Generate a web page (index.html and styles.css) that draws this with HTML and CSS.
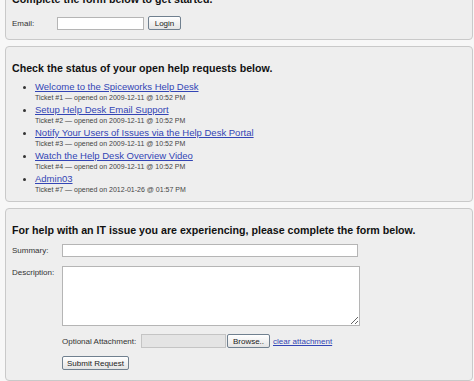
FILE: index.html
```html
<!DOCTYPE html>
<html lang="en">
<head>
  <meta charset="UTF-8">
  <title>Help Desk Portal</title>
  <link rel="stylesheet" href="styles.css">
</head>
<body>

<div class="box box-login">
  <h2>Complete the form below to get started.</h2>
  <div class="login-row">
    <label class="label">Email:</label>
    <input type="text" class="email-input">
    <button class="btn">Login</button>
  </div>
</div>

<div class="box box-tickets">
  <h2>Check the status of your open help requests below.</h2>
  <ul class="tickets">
    <li>
      <a href="#">Welcome to the Spiceworks Help Desk</a>
      <div class="meta">Ticket #1 — opened on 2009-12-11 @ 10:52 PM</div>
    </li>
    <li>
      <a href="#">Setup Help Desk Email Support</a>
      <div class="meta">Ticket #2 — opened on 2009-12-11 @ 10:52 PM</div>
    </li>
    <li>
      <a href="#">Notify Your Users of Issues via the Help Desk Portal</a>
      <div class="meta">Ticket #3 — opened on 2009-12-11 @ 10:52 PM</div>
    </li>
    <li>
      <a href="#">Watch the Help Desk Overview Video</a>
      <div class="meta">Ticket #4 — opened on 2009-12-11 @ 10:52 PM</div>
    </li>
    <li>
      <a href="#">Admin03</a>
      <div class="meta">Ticket #7 — opened on 2012-01-26 @ 01:57 PM</div>
    </li>
  </ul>
</div>

<div class="box box-request">
  <h2>For help with an IT issue you are experiencing, please complete the form below.</h2>
  <div class="field">
    <label class="label">Summary:</label>
    <input type="text" class="summary-input">
  </div>
  <div class="field field-desc">
    <label class="label">Description:</label>
    <textarea class="desc-input"></textarea>
  </div>
  <div class="attach-row">
    <span class="label">Optional Attachment:</span>
    <span class="file-box"></span>
    <button class="btn btn-browse">Browse..</button>
    <a href="#" class="clear-link">clear attachment</a>
  </div>
  <div class="submit-row">
    <button class="btn">Submit Request</button>
  </div>
</div>

</body>
</html>
```

FILE: styles.css
```css
body {
  margin: 0;
  background-color: #f7f7f7;
  font-family: "Liberation Sans", Arial, sans-serif;
  color: #222;
}
.box {
  margin: 0 1px 6px 5px;
  border: 1px solid #c9c9c9;
  border-radius: 4px;
  background-color: #eeeeee;
  padding: 0 6px;
}
.box h2 {
  font-size: 10.65px;
  font-weight: bold;
  color: #111;
  margin: 0;
  line-height: 15px;
  white-space: nowrap;
}
.box-login {
  margin-top: -14px;
  padding-bottom: 9px;
}
.box-login h2 {
  padding-top: 5px;
}
.label {
  font-size: 8px;
  color: #333;
}
.login-row {
  display: flex;
  align-items: center;
  margin-top: 9px;
}
.login-row .label {
  width: 45px;
}
.email-input {
  width: 85px;
  height: 11px;
  padding: 0;
  border: 1px solid #b5b5b5;
  background: #fff;
}
.btn {
  font-family: "Liberation Sans", Arial, sans-serif;
  font-size: 8px;
  color: #222;
  height: 14px;
  padding: 0 5px;
  border: 1px solid #70808f;
  border-radius: 2px;
  background: linear-gradient(#ffffff, #e4e4e4);
}
.login-row .btn {
  margin-left: 4px;
  width: 33px;
}
.box-tickets {
  padding-bottom: 5px;
}
.box-tickets h2 {
  padding-top: 14px;
}
.tickets {
  margin: 5px 0 0;
  padding-left: 23px;
  font-size: 9.5px;
}
.tickets li {
  margin-bottom: 1px;
}
.tickets li::marker {
  color: #333;
  font-size: 9px;
}
.tickets a {
  color: #3345b5;
  line-height: 12px;
}
.meta {
  font-size: 7px;
  color: #444;
  line-height: 10px;
}
.box-request {
  padding-bottom: 10px;
}
.box-request h2 {
  padding-top: 14px;
}
.field {
  display: flex;
  align-items: flex-start;
  margin-top: 6px;
}
.field-desc {
  margin-top: 9px;
}
.field .label {
  width: 50px;
  line-height: 13px;
}
.summary-input {
  width: 294px;
  height: 11px;
  padding: 0;
  border: 1px solid #b5b5b5;
  background: #fff;
}
.desc-input {
  display: block;
  width: 296px;
  height: 58px;
  padding: 0;
  margin: 0;
  border: 1px solid #b5b5b5;
  background: #fff;
}
.attach-row {
  display: flex;
  align-items: center;
  margin: 8px 0 0 50px;
}
.attach-row .label {
  width: 79px;
}
.file-box {
  width: 83px;
  height: 12px;
  border: 1px solid #c4c4c4;
  background: #e4e4e4;
}
.btn-browse {
  margin-left: 1px;
  width: 43px;
  padding: 0;
}
.clear-link {
  margin-left: 3px;
  font-size: 8px;
  color: #3345b5;
}
.submit-row {
  display: flex;
  margin: 8px 0 0 50px;
}
.submit-row .btn {
  width: 67px;
  padding: 0;
}
```
